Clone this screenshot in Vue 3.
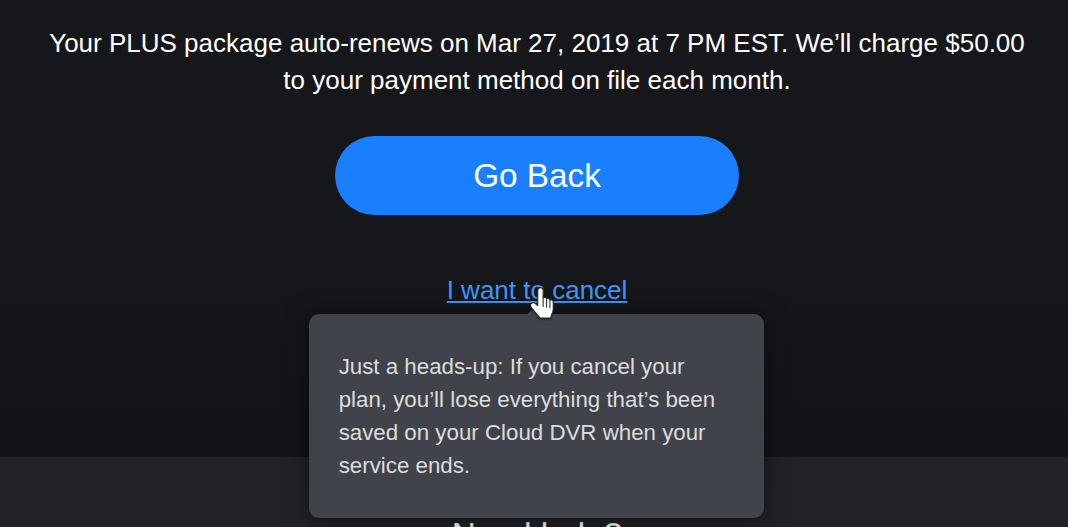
<template>
  <div class="page">
    <main class="main">
      <p class="notice">
        Your PLUS package auto-renews on Mar 27, 2019 at 7 PM EST. We’ll charge $50.00<br />
        to your payment method on file each month.
      </p>
      <button class="back">Go Back</button>
      <div class="cancel">
        <a class="cancel-link" href="#">I want to cancel</a>
        <div class="tooltip">
          <span class="arrow"></span>
          <p>Just a heads-up: If you cancel your plan, you’ll lose everything that’s been saved on your Cloud DVR when your service ends.</p>
        </div>
        <svg class="pointer" viewBox="0 0 26 32" width="27" height="33">
          <path
            d="M11 .8C12.400 .8 13.600 1.900 13.600 3.300V10.500C14.600 9.700 16.400 10 17 11.300C18 10.600 19.700 11 20.200 12.400C21.500 12 23.200 12.800 23.400 14.500V21C23.400 24 22.600 25.500 21.800 27L21 30H10.500L3 21C1.500 19.200 1 17.500 2 16.200C3 15 5 15 6.400 16.300L8.400 18V3.300C8.400 1.900 9.600 .8 11 .8Z"
            fill="#fff"
            stroke="#222"
            stroke-width="1"
            stroke-linejoin="round"
          />
          <path d="M13.600 10.500V19M17 11.300V19.500M20.200 12.400V20" stroke="#222" stroke-width="1" stroke-linecap="round" fill="none" />
        </svg>
      </div>
    </main>
    <section class="help">
      <h2>Need help?</h2>
    </section>
  </div>
</template>

<script setup>
</script>

<style>
html,
body {
  margin: 0;
  background: #16171b;
  overflow: hidden;
}
</style>

<style scoped>
.page {
  height: 527px;
  overflow: hidden;
  font-family: "Liberation Sans", Arial, sans-serif;
  color: #fff;
  display: flex;
  flex-direction: column;
}

.main {
  height: 457px;
  flex: none;
  display: flex;
  flex-direction: column;
  align-items: center;
  padding: 25px 0 0 6px;
  box-sizing: border-box;
  background: linear-gradient(#16171b 60%, #131417);
  position: relative;
}

.notice {
  margin: 0;
  font-size: 26px;
  line-height: 37px;
  text-align: center;
  white-space: nowrap;
}

.back {
  margin-top: 37px;
  width: 404px;
  height: 79px;
  border: 0;
  border-radius: 40px;
  background: #1a7fff;
  color: #fff;
  font-family: inherit;
  font-size: 33.300px;
}

.cancel {
  margin-top: 60px;
  position: relative;
  z-index: 2;
}

.cancel-link {
  font-size: 26px;
  line-height: 30px;
  color: #3f97fb;
  display: block;
}

.tooltip {
  position: absolute;
  top: 39px;
  left: -138px;
  width: 455px;
  height: 204px;
  box-sizing: border-box;
  padding: 36px 40px 36px 30px;
  border-radius: 10px;
  background: #40444a;
  box-shadow: 0 2px 24px rgba(0, 0, 0, 0.55);
}

.tooltip p {
  margin: 0;
  font-size: 22.300px;
  line-height: 33px;
  color: #dcdcdc;
}

.arrow {
  position: absolute;
  top: -8px;
  left: 222px;
  width: 16px;
  height: 16px;
  background: #40444a;
  transform: rotate(45deg);
}

.pointer {
  position: absolute;
  top: 12px;
  left: 82px;
  filter: drop-shadow(0 1px 1px rgba(0, 0, 0, 0.4));
}

.help {
  flex: 1;
  background: #212327;
  text-align: center;
  padding: 58px 0 0 6px;
}

.help h2 {
  margin: 0;
  font-size: 33.300px;
  line-height: 40px;
  font-weight: 400;
}
</style>
